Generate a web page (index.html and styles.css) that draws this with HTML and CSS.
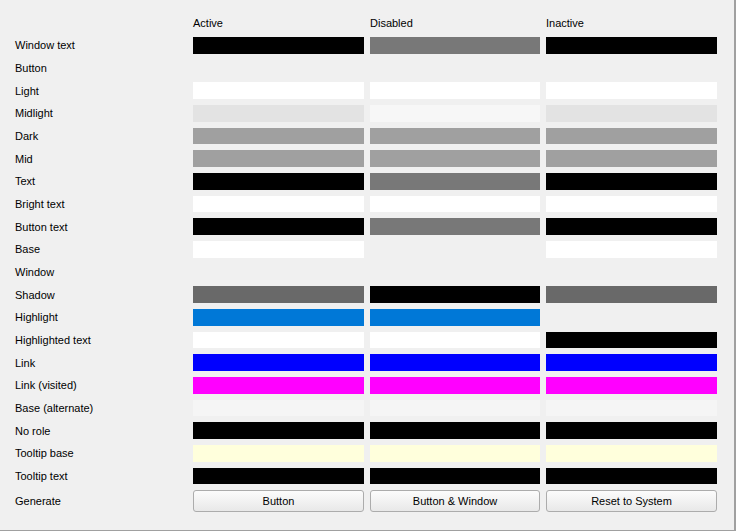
FILE: index.html
```html
<!DOCTYPE html>
<html>
<head>
<meta charset="utf-8">
<link rel="stylesheet" href="styles.css">
</head>
<body>
<div class="frame">
  <div class="grid">
    <div class="head"></div>
    <div class="head">Active</div>
    <div class="head">Disabled</div>
    <div class="head">Inactive</div>

    <div class="label">Window text</div>
    <div class="sw k"></div><div class="sw g"></div><div class="sw k"></div>

    <div class="label">Button</div>
    <div class="sw"></div><div class="sw"></div><div class="sw"></div>

    <div class="label">Light</div>
    <div class="sw w"></div><div class="sw w"></div><div class="sw w"></div>

    <div class="label">Midlight</div>
    <div class="sw ml"></div><div class="sw mld"></div><div class="sw ml"></div>

    <div class="label">Dark</div>
    <div class="sw dk"></div><div class="sw dk"></div><div class="sw dk"></div>

    <div class="label">Mid</div>
    <div class="sw dk"></div><div class="sw dk"></div><div class="sw dk"></div>

    <div class="label">Text</div>
    <div class="sw k"></div><div class="sw g"></div><div class="sw k"></div>

    <div class="label">Bright text</div>
    <div class="sw w"></div><div class="sw w"></div><div class="sw w"></div>

    <div class="label">Button text</div>
    <div class="sw k"></div><div class="sw g"></div><div class="sw k"></div>

    <div class="label">Base</div>
    <div class="sw w"></div><div class="sw"></div><div class="sw w"></div>

    <div class="label">Window</div>
    <div class="sw"></div><div class="sw"></div><div class="sw"></div>

    <div class="label">Shadow</div>
    <div class="sw sh"></div><div class="sw k"></div><div class="sw sh"></div>

    <div class="label">Highlight</div>
    <div class="sw hl"></div><div class="sw hl"></div><div class="sw"></div>

    <div class="label">Highlighted text</div>
    <div class="sw w"></div><div class="sw w"></div><div class="sw k"></div>

    <div class="label">Link</div>
    <div class="sw ln"></div><div class="sw ln"></div><div class="sw ln"></div>

    <div class="label">Link (visited)</div>
    <div class="sw lv"></div><div class="sw lv"></div><div class="sw lv"></div>

    <div class="label">Base (alternate)</div>
    <div class="sw ba"></div><div class="sw ba"></div><div class="sw ba"></div>

    <div class="label">No role</div>
    <div class="sw k"></div><div class="sw k"></div><div class="sw k"></div>

    <div class="label">Tooltip base</div>
    <div class="sw tb"></div><div class="sw tb"></div><div class="sw tb"></div>

    <div class="label">Tooltip text</div>
    <div class="sw k"></div><div class="sw k"></div><div class="sw k"></div>

    <div class="label">Generate</div>
    <button class="btn">Button</button>
    <button class="btn">Button &amp; Window</button>
    <button class="btn">Reset to System</button>
  </div>
</div>
</body>
</html>
```
FILE: styles.css
```css
html, body {
  margin: 0;
  padding: 0;
  background: #f0f0f0;
}
body {
  width: 736px;
  height: 531px;
  overflow: hidden;
  font-family: "Liberation Sans", Arial, sans-serif;
  font-size: 11px;
  color: #000;
}
.frame {
  box-sizing: border-box;
  width: 736px;
  height: 531px;
  border-right: 2px solid #a0a0a0;
  border-bottom: 1px solid #a0a0a0;
  padding: 14px 0 0 15px;
}
.grid {
  display: grid;
  grid-template-columns: 172px 171px 170px 171px;
  grid-template-rows: 17px repeat(20, 16.68px) 22px;
  column-gap: 6px;
  row-gap: 6px;
}
.head {
  display: flex;
  align-items: center;
}
.label {
  display: flex;
  align-items: center;
  white-space: nowrap;
}
.sw { background: transparent; }
.k { background: #000000; }
.g { background: #787878; }
.w { background: #ffffff; }
.ml { background: #e3e3e3; }
.mld { background: #f7f7f7; }
.dk { background: #a0a0a0; }
.sh { background: #696969; }
.hl { background: #0078d7; }
.ln { background: #0000ff; }
.lv { background: #ff00ff; }
.ba { background: #f5f5f5; }
.tb { background: #ffffdc; }
.btn {
  margin: 0;
  padding: 0;
  box-sizing: border-box;
  height: 22px;
  border: 1px solid #acacac;
  border-radius: 3px;
  background: linear-gradient(#fcfcfc, #e8e8e8);
  font-family: "Liberation Sans", Arial, sans-serif;
  font-size: 11px;
  color: #000;
}
```
